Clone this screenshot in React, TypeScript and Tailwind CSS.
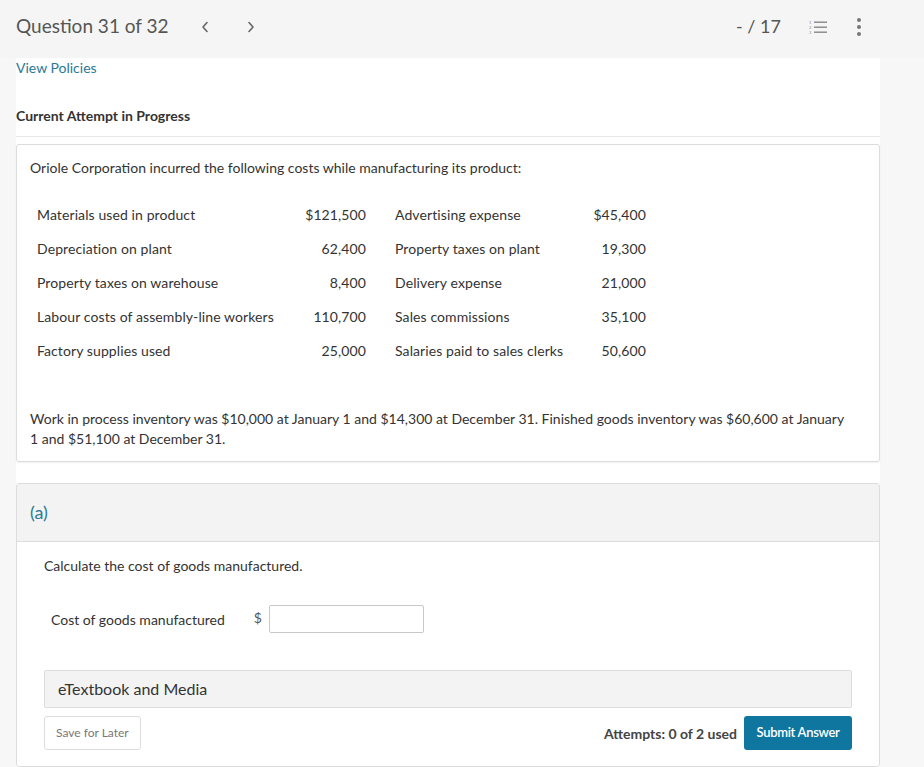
import React from 'react'

const costs = [
  ['Materials used in product', '$121,500', 'Advertising expense', '$45,400'],
  ['Depreciation on plant', '62,400', 'Property taxes on plant', '19,300'],
  ['Property taxes on warehouse', '8,400', 'Delivery expense', '21,000'],
  ['Labour costs of assembly-line workers', '110,700', 'Sales commissions', '35,100'],
  ['Factory supplies used', '25,000', 'Salaries paid to sales clerks', '50,600'],
]

function ListIcon() {
  return (
    <svg width="18" height="14" viewBox="0 0 18 14" fill="none">
      <text x="0" y="4" fontSize="4" fill="#888" fontFamily="Lato, sans-serif">1</text>
      <text x="0" y="9" fontSize="4" fill="#888" fontFamily="Lato, sans-serif">2</text>
      <text x="0" y="14" fontSize="4" fill="#888" fontFamily="Lato, sans-serif">3</text>
      <rect x="5" y="1.5" width="13" height="1.4" fill="#888" />
      <rect x="5" y="6.5" width="13" height="1.4" fill="#888" />
      <rect x="5" y="11.5" width="13" height="1.4" fill="#888" />
    </svg>
  )
}

function Chevron({ dir }: { dir: 'left' | 'right' }) {
  return (
    <svg width="8" height="12" viewBox="0 0 8 12" fill="none">
      <path
        d={dir === 'left' ? 'M6 1.5 L2 6 L6 10.5' : 'M2 1.5 L6 6 L2 10.5'}
        stroke="#666"
        strokeWidth="1.6"
        strokeLinecap="round"
        strokeLinejoin="round"
      />
    </svg>
  )
}

export default function App() {
  return (
    <div className="min-h-[767px] bg-[#f7f7f7] text-[#333] font-['Lato','Liberation_Sans',sans-serif]">
      {/* Header */}
      <div className="h-[58px] flex items-center bg-[#f5f5f5] px-4 pb-[6px]">
        <span className="text-[19px] text-[#555]">Question 31 of 32</span>
        <span className="ml-[32px] mt-[2px]"><Chevron dir="left" /></span>
        <span className="ml-[38px] mt-[2px]"><Chevron dir="right" /></span>
        <div className="ml-auto flex items-center">
          <span className="text-[18px] text-[#555]">- / 17</span>
          <span className="ml-[28px] mt-[2px]"><ListIcon /></span>
          <span className="ml-[30px] mr-[47px] flex flex-col gap-[3px] mt-[2px]">
            <span className="w-[4px] h-[4px] rounded-full bg-[#777]" />
            <span className="w-[4px] h-[4px] rounded-full bg-[#777]" />
            <span className="w-[4px] h-[4px] rounded-full bg-[#777]" />
          </span>
        </div>
      </div>

      {/* Content column */}
      <div className="ml-4 w-[864px] bg-white pb-1">
        <div className="text-[14px] text-[#2a7898] leading-5">View Policies</div>
        <div className="mt-[28px] text-[14px] font-bold text-[#333] leading-5">Current Attempt in Progress</div>
        <div className="mt-[10px] border-t border-[#e6e6e6]" />

        {/* Question box */}
        <div className="mt-[7px] border border-[#dcdcdc] rounded-[3px] shadow-[0_1px_2px_rgba(0,0,0,0.06)] px-[13px] pt-[13px] pb-[12px]">
          <p className="text-[14px] leading-5 text-[#333]">
            Oriole Corporation incurred the following costs while manufacturing its product:
          </p>
          <div className="mt-[19px] ml-[7px] text-[14px] text-[#333] tracking-[0.1px]">
            {costs.map(([l1, a1, l2, a2]) => (
              <div key={l1} className="flex items-center h-[34px]">
                <span className="w-[245px]">{l1}</span>
                <span className="w-[84px] text-right">{a1}</span>
                <span className="w-[200px] pl-[29px]">{l2}</span>
                <span className="w-[80px] text-right">{a2}</span>
              </div>
            ))}
          </div>
          <p className="mt-[42px] text-[14px] leading-5 text-[#333] pr-[16px]">
            Work in process inventory was $10,000 at January 1 and $14,300 at December 31. Finished goods inventory was $60,600 at January 1 and $51,100 at December 31.
          </p>
        </div>

        {/* Part (a) */}
        <div className="mt-[21px] border border-[#dcdcdc] rounded-[3px]">
          <div className="h-[58px] bg-[#f3f3f3] border-b border-[#dcdcdc] flex items-center px-[13px]">
            <span className="text-[18px] text-[#2a7898]">(a)</span>
          </div>
          <div className="px-[27px] pt-[14px]">
            <p className="text-[14px] leading-5 text-[#333]">Calculate the cost of goods manufactured.</p>
            <div className="mt-[28px] flex items-center h-[30px] text-[14px]">
              <span className="ml-[7px]">Cost of goods manufactured</span>
              <span className="ml-[29px] text-[#555] mt-[-3px]">$</span>
              <input className="ml-[7px] w-[155px] h-[28px] border border-[#c8c8c8] rounded-[2px] bg-white outline-none" />
            </div>
            <div className="mt-[36px] h-[38px] bg-[#f3f3f3] border border-[#dddddd] rounded-[2px] flex items-center px-[13px] text-[16px] text-[#333]">
              eTextbook and Media
            </div>
            <div className="mt-[8px] flex items-center pb-[16px]">
              <button className="h-[34px] px-[11px] border border-[#dddddd] rounded-[3px] text-[12px] text-[#777] bg-white">
                Save for Later
              </button>
              <span className="ml-auto text-[14px] font-bold text-[#444]">Attempts: 0 of 2 used</span>
              <button className="ml-[7px] h-[34px] w-[108px] rounded-[3px] bg-[#0f76a0] text-white text-[13px] font-semibold tracking-[-0.3px]">
                Submit Answer
              </button>
            </div>
          </div>
        </div>
      </div>
    </div>
  )
}
